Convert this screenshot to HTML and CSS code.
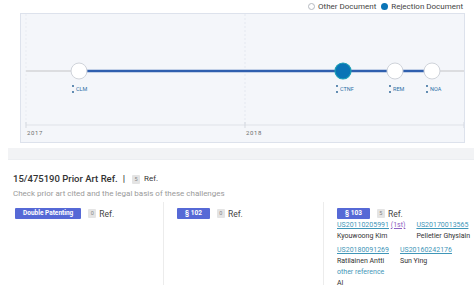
FILE: index.html
```html
<!DOCTYPE html>
<html lang="en">
  <head>
    <meta charset="UTF-8" />
    <title>Prior Art Timeline</title>
    <link rel="stylesheet" href="styles.css">
  </head>
  <body>
    <div class="legend">
      <span class="legend-item"><span class="dot dot-other"></span>Other Document</span>
      <span class="legend-item"><span class="dot dot-reject"></span>Rejection Document</span>
    </div>

    <div class="chart">
      <svg width="443" height="128" viewBox="0 0 443 128">
        <line x1="224" y1="0" x2="224" y2="111" stroke="#e4e8f0" stroke-dasharray="2 2" />
        <line x1="5" y1="0" x2="5" y2="111" stroke="#e9ecf2" stroke-dasharray="2 2" />
        <line x1="5" y1="57" x2="443" y2="57" stroke="#dcdde0" stroke-width="2" />
        <line x1="58" y1="57" x2="411" y2="57" stroke="#2f5fae" stroke-width="2.5" />

        <!-- events -->
        <circle cx="58" cy="57" r="8" fill="#fff" stroke="#cfd3da" />
        <circle cx="322" cy="57" r="8" fill="#0a74b6" stroke="#1c9fb6" stroke-width="1.2" />
        <circle cx="374" cy="57" r="8" fill="#fff" stroke="#cfd3da" />
        <circle cx="411" cy="57" r="8" fill="#fff" stroke="#cfd3da" />

        <g fill="#1d5c8f">
          <circle cx="52" cy="72" r="0.9" /><circle cx="52" cy="78" r="0.9" />
          <circle cx="316" cy="72" r="0.9" /><circle cx="316" cy="78" r="0.9" />
          <circle cx="369" cy="72" r="0.9" /><circle cx="369" cy="78" r="0.9" />
          <circle cx="406" cy="72" r="0.9" /><circle cx="406" cy="78" r="0.9" />
        </g>
        <g class="ev-label">
          <text x="55" y="77">CLM</text>
          <text x="319" y="77">CTNF</text>
          <text x="372" y="77">REM</text>
          <text x="409" y="77">NOA</text>
        </g>

        <!-- axis -->
        <line x1="5" y1="111" x2="443" y2="111" stroke="#dfe2e8" />
        <line x1="5" y1="108" x2="5" y2="114" stroke="#d5d9e0" />
        <line x1="224" y1="108" x2="224" y2="114" stroke="#d5d9e0" />
        <line x1="443" y1="108" x2="443" y2="114" stroke="#d5d9e0" />
        <text class="year" x="6" y="121">2017</text>
        <text class="year" x="225" y="121">2018</text>
      </svg>
    </div>

    <div class="band"></div>

    <div class="card">
      <h1 class="title">15/475190 Prior Art Ref. <span class="sep">|</span> <span class="count">5</span> <span class="ref">Ref.</span></h1>
      <p class="subtitle">Check prior art cited and the legal basis of these challenges</p>

      <div class="columns">
        <div class="col col-first">
          <div class="basis"><span class="tag">Double Patenting</span><span class="count">0</span><span class="ref">Ref.</span></div>
        </div>
        <div class="col">
          <div class="basis"><span class="tag">§ 102</span><span class="count">0</span><span class="ref">Ref.</span></div>
        </div>
        <div class="col">
          <div class="basis"><span class="tag">§ 103</span><span class="count">5</span><span class="ref">Ref.</span></div>
          <div class="docs">
            <div class="doc">
              <a class="doc-link" href="#">US20110205991</a> <span class="first">(1st)</span>
              <div class="doc-name">Kyouwoong Kim</div>
            </div>
            <div class="doc">
              <a class="doc-link" href="#">US20170013565</a>
              <div class="doc-name">Pelletier Ghyslain</div>
            </div>
            <div class="doc">
              <a class="doc-link" href="#">US20180091269</a>
              <div class="doc-name">Ratilainen Antti</div>
            </div>
            <div class="doc">
              <a class="doc-link" href="#">US20160242176</a>
              <div class="doc-name">Sun Ying</div>
            </div>
          </div>
          <div class="doc doc-extra">
            <a class="doc-other" href="#">other reference</a>
            <div class="doc-name">AI</div>
          </div>
        </div>
      </div>
    </div>
  </body>
</html>
```

FILE: styles.css
```css
:root {
  --tag-color: #5669d6;
  --link-color: #3f96b8;
  --node-blue: #0a74b6;
  --text-dark: #2f2f2f;
  --text-muted: #9a9a9a;
}

* {
  box-sizing: border-box;
  margin: 0;
  padding: 0;
}

body {
  font-family: Roboto, "Liberation Sans", sans-serif;
  background: #fff;
  color: var(--text-dark);
  width: 474px;
  height: 285px;
  overflow: hidden;
}

.legend {
  display: flex;
  justify-content: flex-end;
  gap: 5px;
  height: 13px;
  padding-right: 11px;
  font-size: 8px;
  line-height: 11px;
  color: #444;
}

.legend-item {
  display: flex;
  align-items: center;
  gap: 3px;
}

.dot {
  width: 7px;
  height: 7px;
  border-radius: 50%;
}

.dot-other {
  border: 1px solid #b5b9c0;
  background: #fff;
}

.dot-reject {
  background: var(--node-blue);
}

.chart {
  margin-left: 20px;
  width: 445px;
  height: 130px;
  border: 1px solid #dde2ec;
  background: #f4f6fa;
}

.chart svg {
  display: block;
}

.ev-label {
  font-size: 5.5px;
  fill: #2b6fa6;
}

.year {
  font-size: 6px;
  fill: #6d6d6d;
  letter-spacing: 0.6px;
}

.band {
  margin: 5px 0 0 8px;
  height: 12px;
  background: #f2f3f5;
  border-bottom: 1px solid #eceef1;
}

.card {
  padding: 12px 0 0 13px;
}

.title {
  font-size: 9.5px;
  font-weight: 500;
  line-height: 14px;
  color: #333;
  display: flex;
  align-items: center;
  gap: 4px;
}

.title .sep {
  margin: 0 3px 0 1px;
}

.count {
  display: inline-block;
  min-width: 8px;
  height: 9px;
  padding: 0 2px;
  background: #e4e4e4;
  border-radius: 1px;
  font-size: 5.5px;
  line-height: 9px;
  text-align: center;
  color: #888;
  font-weight: 400;
}

.title .ref {
  font-size: 8px;
  font-weight: 400;
}

.subtitle {
  margin-top: 3px;
  font-size: 8px;
  line-height: 10px;
  color: var(--text-muted);
}

.columns {
  display: grid;
  grid-template-columns: 155px 160px 1fr;
  margin: 3px 0 0 -5px;
  height: 90px;
}

.col {
  padding: 6px 0 0 13px;
  border-left: 1px solid #ececec;
}

.col-first {
  padding-left: 7px;
  border-left: none;
}

.basis {
  display: flex;
  align-items: center;
  gap: 7px;
  height: 11px;
}

.basis .ref {
  font-size: 8.5px;
  color: #444;
  margin-left: -4px;
}

.tag {
  display: inline-block;
  height: 11px;
  padding: 0 8px;
  background: var(--tag-color);
  color: #fff;
  font-size: 6.5px;
  font-weight: 700;
  line-height: 11px;
  border-radius: 1px;
}

.docs {
  display: flex;
  flex-wrap: wrap;
  gap: 4px 11px;
  margin-top: 1px;
  width: 140px;
}

.doc {
  font-size: 7px;
  line-height: 10.5px;
}

.doc-extra {
  margin-top: 1px;
}

.doc-link,
.doc-other {
  color: var(--link-color);
}

.doc-other {
  text-decoration: none;
}

.first {
  color: #8c63c2;
  text-decoration: underline;
}

.doc-name {
  color: #333;
}
```
